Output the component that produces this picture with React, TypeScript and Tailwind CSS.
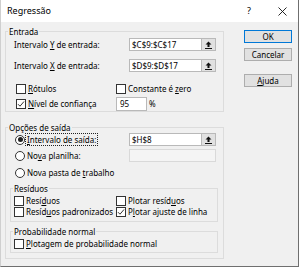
import React from 'react';

const font = { fontFamily: '"Noto Sans", "Liberation Sans", sans-serif' };

const Check = ({ checked = false }: { checked?: boolean }) => (
  <span className="flex h-[10px] w-[10px] shrink-0 items-center justify-center border border-[#333] bg-white">
    {checked && (
      <svg width="8" height="8" viewBox="0 0 8 8">
        <path d="M1 4.2 L3 6.2 L7 1.5" fill="none" stroke="#333" strokeWidth="1" />
      </svg>
    )}
  </span>
);

const Radio = ({ checked = false }: { checked?: boolean }) => (
  <span className="flex h-[10px] w-[10px] shrink-0 items-center justify-center rounded-full border border-[#333] bg-white">
    {checked && <span className="h-[5px] w-[5px] rounded-full bg-[#222]" />}
  </span>
);

const RefInput = ({ value = '', disabled = false }: { value?: string; disabled?: boolean }) =>
  disabled ? (
    <div className="h-[13px] w-[87px] border border-[#d9d9d9] bg-[#f4f4f4]" />
  ) : (
    <div className="flex h-[13px] w-[87px] border border-[#b9b9b9] bg-white">
      <span className="flex-1 pl-[2px] leading-[11px]">{value}</span>
      <span className="flex w-[14px] items-center justify-center border-l border-[#b9b9b9] bg-[#e1e1e1]">
        <svg width="7" height="8" viewBox="0 0 7 8">
          <path d="M3.5 0.5 L0.5 3.5 H2.5 V6 H4.5 V3.5 H6.5 Z" fill="#111" />
          <path d="M0 7.5 H7" stroke="#111" strokeWidth="1" />
        </svg>
      </span>
    </div>
  );

const Group = ({ label, className, children }: { label: string; className: string; children: React.ReactNode }) => (
  <div className={`relative border border-[#dcdcdc] ${className}`}>
    <span className="absolute -top-[6px] left-[2px] bg-[#f0f0f0] px-[1px] leading-[11px]">{label}</span>
    {children}
  </div>
);

const Btn = ({ children, primary = false, className = '' }: { children: React.ReactNode; primary?: boolean; className?: string }) => (
  <div
    className={`flex h-[13px] w-[48px] items-center justify-center border bg-[#e1e1e1] leading-[11px] ${
      primary ? 'border-[#0078d7]' : 'border-[#adadad]'
    } ${className}`}
  >
    {children}
  </div>
);

export default function App() {
  return (
    <div className="h-[269px] w-[300px] whitespace-nowrap bg-white text-[8px] text-black" style={font}>
      <div className="flex h-[267px] w-[299px] flex-col border-b border-l border-r border-b-[#6f6f6f] border-l-[#cfcfcf] border-r-[#6f6f6f] bg-[#f0f0f0]">
        <div className="flex h-[22px] items-center bg-white pl-[6px] pr-[11px]">
          <span className="text-[9px]">Regressão</span>
          <span className="ml-auto text-[9px]">?</span>
          <svg className="ml-[27px]" width="9" height="9" viewBox="0 0 9 9">
            <path d="M0.5 0.5 L8.5 8.5 M8.5 0.5 L0.5 8.5" stroke="#111" strokeWidth="0.9" />
          </svg>
        </div>

        <div className="flex flex-1">
          <div className="pl-[4px] pt-[9px]">
            <Group label="Entrada" className="h-[81px] w-[219px]">
              <div className="mt-[6px] flex h-[13px] items-center pl-[8px]">
                <span className="w-[115px]">
                  Intervalo <u>Y</u> de entrada:
                </span>
                <RefInput value="$C$9:$C$17" />
              </div>
              <div className="mt-[8px] flex h-[13px] items-center pl-[8px]">
                <span className="w-[115px]">
                  Intervalo <u>X</u> de entrada:
                </span>
                <RefInput value="$D$9:$D$17" />
              </div>
              <div className="mt-[10px] flex h-[13px] items-center pl-[10px]">
                <span className="flex w-[100px] items-center gap-[2px]">
                  <Check />
                  <span>
                    <u>R</u>ótulos
                  </span>
                </span>
                <span className="flex items-center gap-[2px]">
                  <Check />
                  <span>
                    Constante é <u>z</u>ero
                  </span>
                </span>
              </div>
              <div className="mt-[2px] flex h-[14px] items-center pl-[10px]">
                <span className="flex w-[100px] items-center gap-[2px]">
                  <Check checked />
                  <span>
                    <u>N</u>ível de confiança
                  </span>
                </span>
                <span className="h-[14px] w-[31px] border border-[#b9b9b9] bg-white pl-[3px] leading-[12px]">95</span>
                <span className="ml-[2px]">%</span>
              </div>
            </Group>

            <Group label="Opções de saída" className="mt-[15px] h-[132px] w-[219px]">
              <div className="mt-[5px] flex h-[13px] items-center pl-[9px]">
                <span className="flex w-[114px] items-center gap-[1px]">
                  <Radio checked />
                  <span className="px-[1px] leading-[11px] outline outline-1 outline-dotted outline-[#222]">
                    <u>I</u>ntervalo de saída:
                  </span>
                </span>
                <RefInput value="$H$8" />
              </div>
              <div className="mt-[3px] flex h-[13px] items-center pl-[9px]">
                <span className="flex w-[114px] items-center gap-[2px]">
                  <Radio />
                  <span>
                    No<u>v</u>a planilha:
                  </span>
                </span>
                <RefInput disabled />
              </div>
              <div className="mt-[4px] flex h-[13px] items-center gap-[2px] pl-[9px]">
                <Radio />
                <span>
                  Nova pasta de <u>t</u>rabalho
                </span>
              </div>

              <Group label="Resíduos" className="ml-[4px] mt-[9px] h-[34px] w-[208px]">
                <div className="mt-[6px] flex h-[11px] items-center pl-[3px]">
                  <span className="flex w-[102px] items-center gap-[2px]">
                    <Check />
                    <span>
                      Resí<u>d</u>uos
                    </span>
                  </span>
                  <span className="flex items-center gap-[2px]">
                    <Check />
                    <span>
                      Plotar resíd<u>u</u>os
                    </span>
                  </span>
                </div>
                <div className="flex h-[11px] items-center pl-[3px]">
                  <span className="flex w-[102px] items-center gap-[2px]">
                    <Check />
                    <span>
                      Resíd<u>u</u>os padronizados
                    </span>
                  </span>
                  <span className="flex items-center gap-[2px]">
                    <Check checked />
                    <span>
                      P<u>l</u>otar ajuste de linha
                    </span>
                  </span>
                </div>
              </Group>

              <Group label="Probabilidade normal" className="ml-[4px] mt-[9px] h-[22px] w-[208px]">
                <div className="mt-[6px] flex h-[11px] items-center gap-[2px] pl-[3px]">
                  <Check />
                  <span>
                    <u>P</u>lotagem de probabilidade normal
                  </span>
                </div>
              </Group>
            </Group>
          </div>

          <div className="ml-[20px] pt-[8px]">
            <Btn primary>OK</Btn>
            <Btn className="mt-[5px]">Cancelar</Btn>
            <Btn className="mt-[13px]">
              <span>
                <u>A</u>juda
              </span>
            </Btn>
          </div>
        </div>
      </div>
    </div>
  );
}
